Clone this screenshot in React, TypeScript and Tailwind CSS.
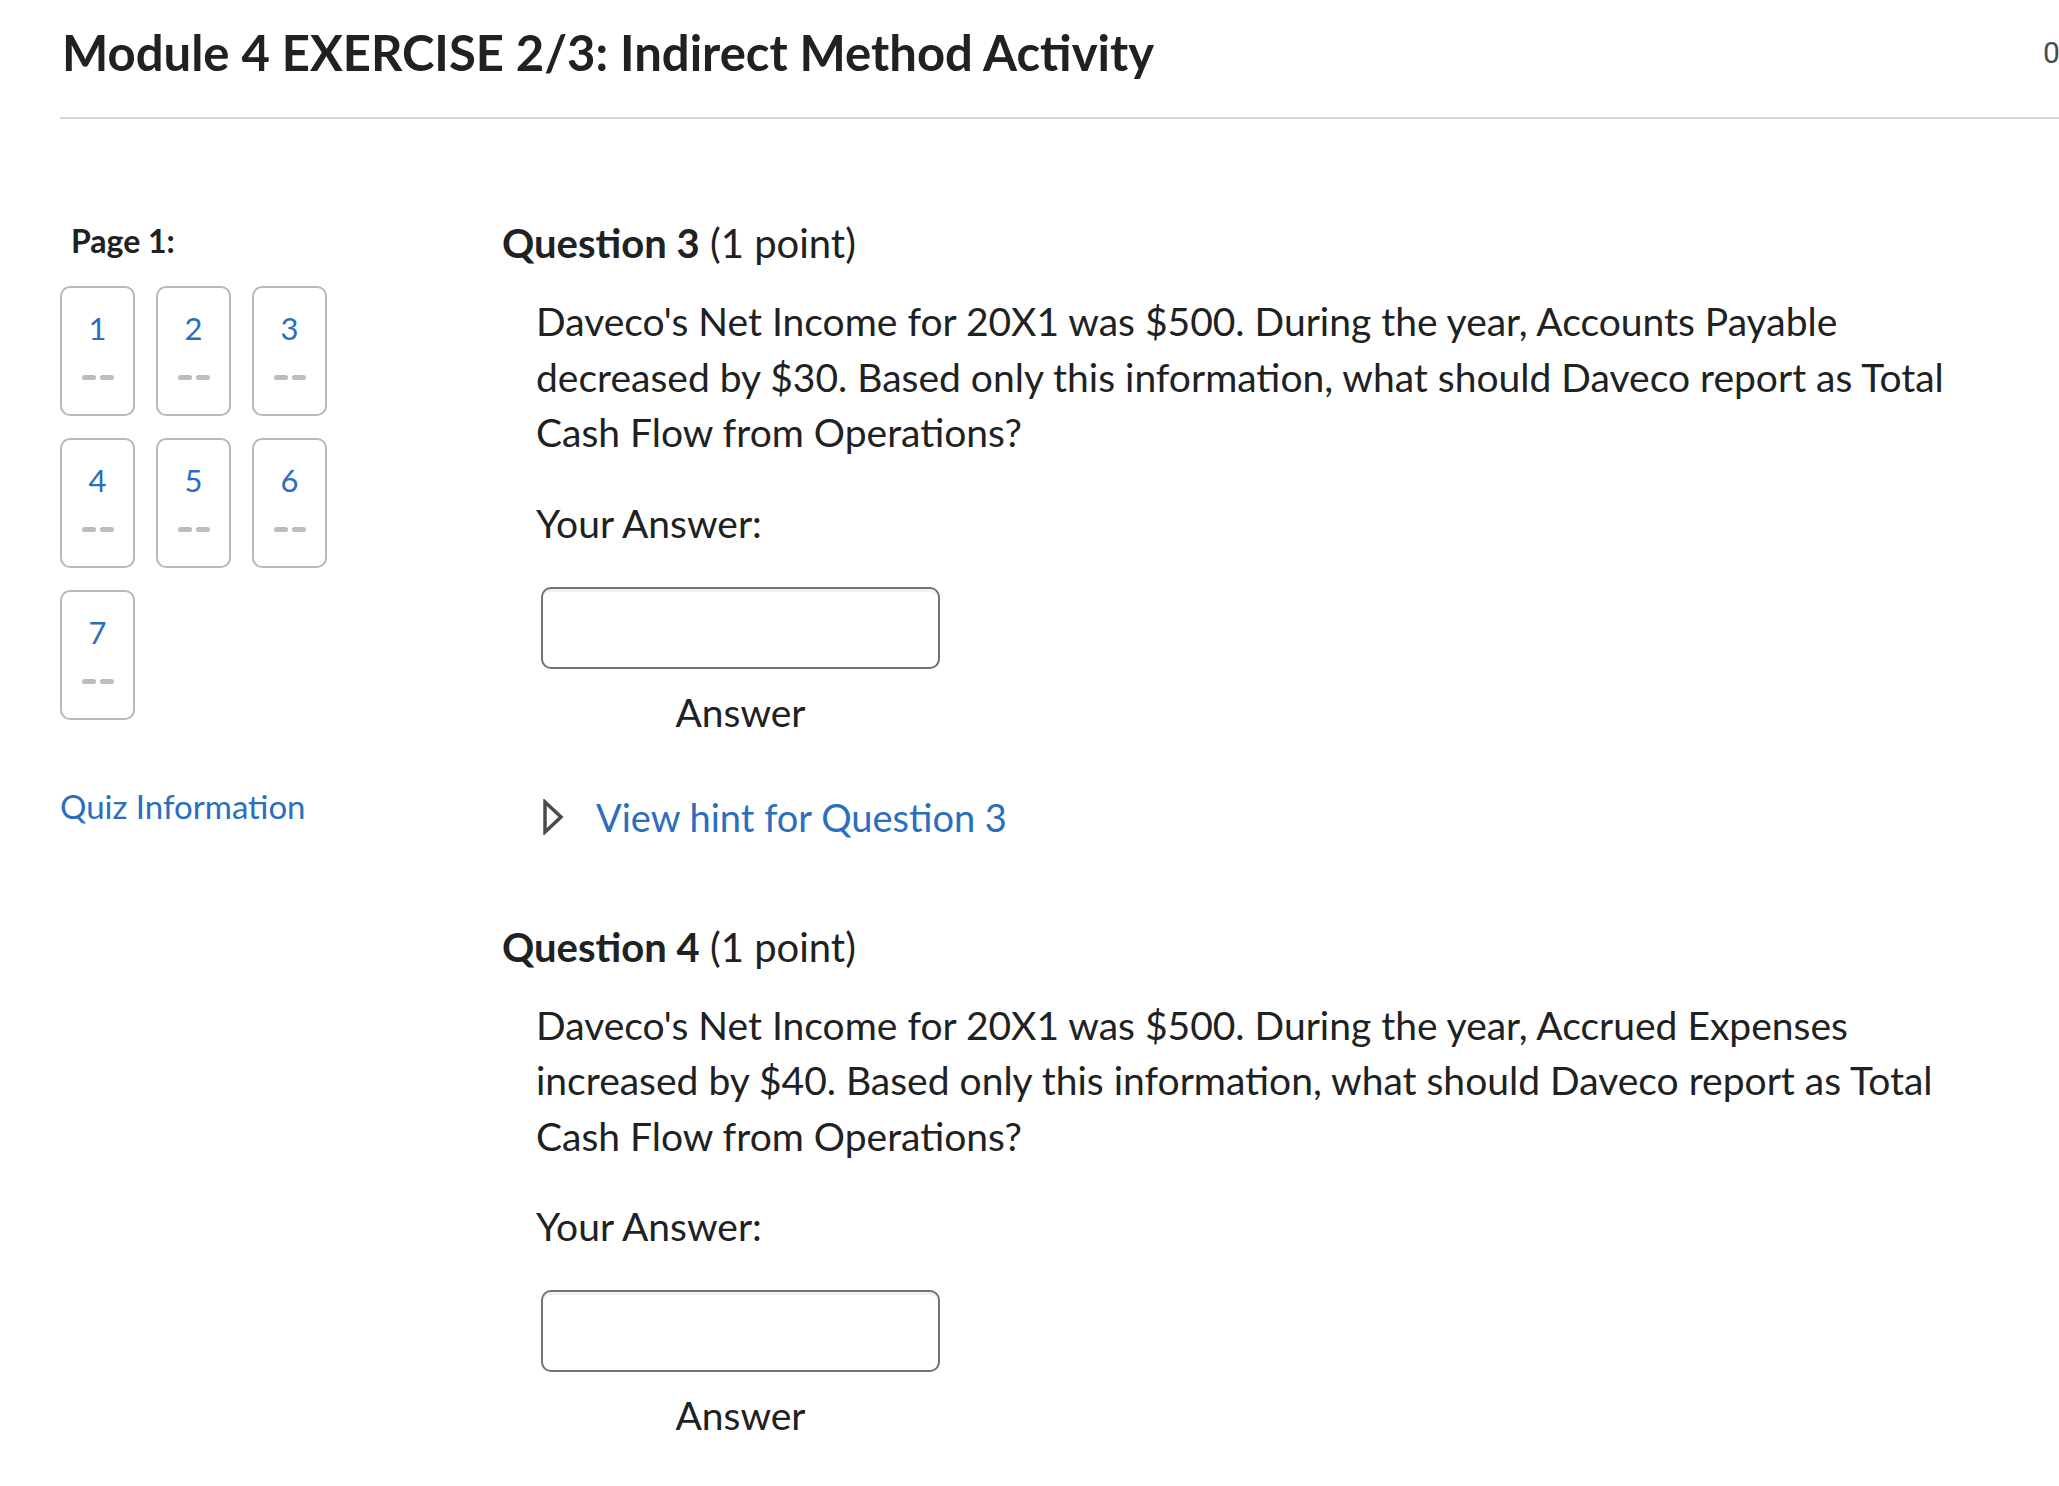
import React from 'react';

const questions = [
    {
        num: 3,
        text: "Daveco's Net Income for 20X1 was $500. During the year, Accounts Payable decreased by $30. Based only this information, what should Daveco report as Total Cash Flow from Operations?",
        hint: true,
    },
    {
        num: 4,
        text: "Daveco's Net Income for 20X1 was $500. During the year, Accrued Expenses increased by $40. Based only this information, what should Daveco report as Total Cash Flow from Operations?",
        hint: false,
    },
];

function QuestionTile({ n }: { n: number }) {
    return (
        <div className="w-[75px] h-[130px] rounded-[10px] border-2 border-[#b4b9bf] flex flex-col items-center">
            <span className="mt-[20px] text-[31px] leading-[40px] text-[#2a6ebd]">{n}</span>
            <div className="mt-[27px] flex gap-[4px]">
                <span className="w-[14px] h-[5px] rounded-full bg-[#b9bec3]" />
                <span className="w-[14px] h-[5px] rounded-full bg-[#b9bec3]" />
            </div>
        </div>
    );
}

function HintArrow() {
    return (
        <svg width="22" height="36" viewBox="0 0 22 36" className="shrink-0">
            <path d="M3 3 L19 18 L3 33 Z" fill="none" stroke="#494c4e" strokeWidth="3.5" strokeLinejoin="miter" />
        </svg>
    );
}

function Question({ num, text, hint }: { num: number; text: string; hint: boolean }) {
    return (
        <section>
            <h2 className="text-[40px] leading-[52px] text-[#202122]">
                <span className="font-bold">Question {num}</span> (1 point)
            </h2>
            <div className="pl-[34px] pr-[40px]">
                <p className="mt-[25px] text-[39px] leading-[55.5px] max-w-[1450px]">{text}</p>
                <p className="mt-[34px] text-[39px] leading-[56px]">Your Answer:</p>
                <div className="mt-[36px] ml-[5px] w-[399px] flex flex-col items-center">
                    <input
                        type="text"
                        aria-label="Answer"
                        className="w-[399px] h-[82px] rounded-[10px] border-2 border-[#6e7377] bg-white shadow-[inset_0_3px_0_#f1f1f1] outline-none"
                    />
                    <span className="mt-[15px] text-[39px] leading-[56px]">Answer</span>
                </div>
                {hint && (
                    <div className="mt-[49px] ml-[6px] flex items-center gap-[32px]">
                        <HintArrow />
                        <a href="#" className="text-[38px] leading-[56px] text-[#2a6ebd]">View hint for Question {num}</a>
                    </div>
                )}
            </div>
        </section>
    );
}

export default function App() {
    return (
        <div className="min-h-screen bg-white text-[#202122] overflow-hidden" style={{ fontFamily: 'Lato, "Open Sans", sans-serif' }}>
            <header className="pl-[60px] pt-[22px]">
                <div className="flex items-center justify-between">
                    <h1 className="pl-[2px] text-[49px] leading-[60px] font-bold text-[#202122] whitespace-nowrap">
                        Module 4 EXERCISE 2/3: Indirect Method Activity
                    </h1>
                    <span className="w-[16px] overflow-hidden whitespace-nowrap text-[30px] text-[#494c4e]" style={{ fontFamily: 'Roboto, sans-serif' }}>0 of 7</span>
                </div>
                <hr className="mt-[35px] border-0 h-[2px] bg-[#d3d9e3]" />
            </header>

            <div className="flex pl-[60px]">
                <aside className="w-[442px] shrink-0 pt-[102px]">
                    <h3 className="pl-[11px] text-[32px] leading-[40px] font-bold">Page 1:</h3>
                    <div className="mt-[25px] grid grid-cols-[repeat(3,75px)] gap-x-[21px] gap-y-[22px]">
                        {[1, 2, 3, 4, 5, 6, 7].map(n => (
                            <QuestionTile key={n} n={n} />
                        ))}
                    </div>
                    <a href="#" className="block mt-[64px] text-[33px] leading-[44px] text-[#2a6ebd]">Quiz Information</a>
                </aside>

                <main className="flex-1 pt-[98px] flex flex-col gap-[76px]">
                    {questions.map(q => (
                        <Question key={q.num} {...q} />
                    ))}
                </main>
            </div>
        </div>
    );
}
